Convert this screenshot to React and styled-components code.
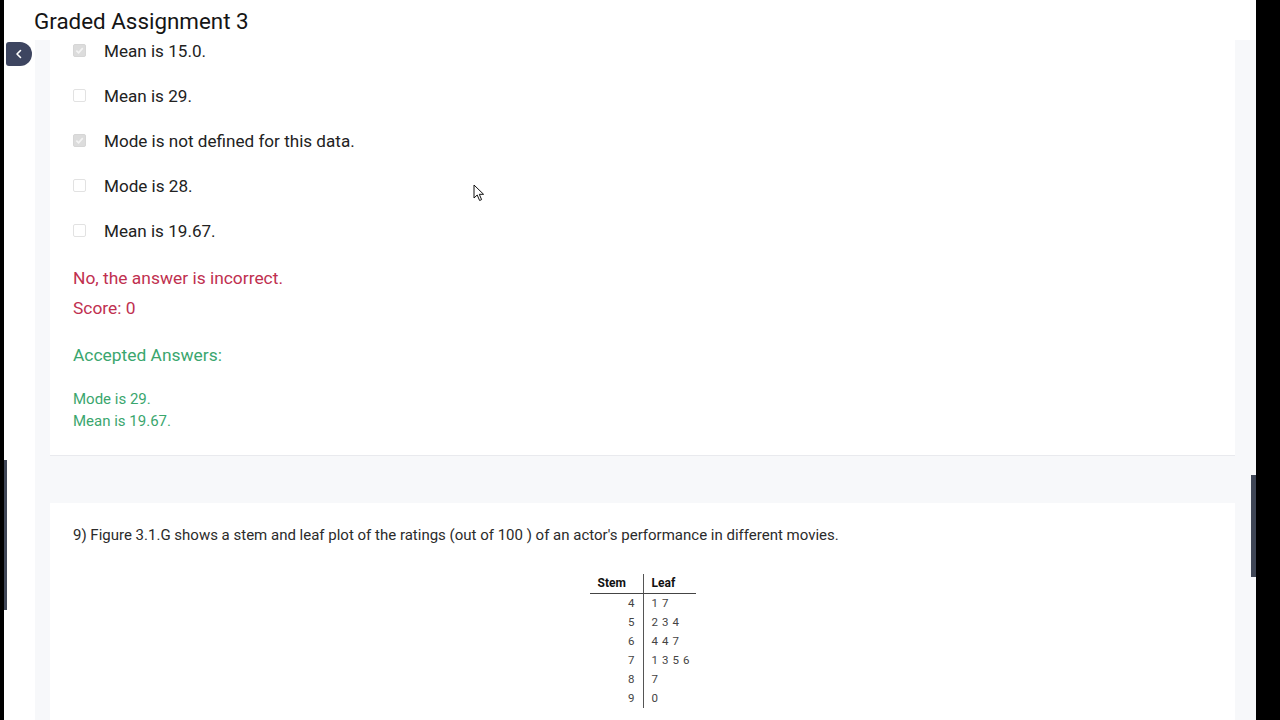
import React from 'react';
import styled, { createGlobalStyle } from 'styled-components';

const GlobalStyle = createGlobalStyle`
  html, body {
    margin: 0;
    padding: 0;
    background: #000;
    font-family: Roboto, "Liberation Sans", Arial, sans-serif;
    overflow: hidden;
  }
`;

const Frame = styled.div`
  display: flex;
  width: 1280px;
  height: 720px;
  background: #000;
  position: relative;
  overflow: hidden;
`;

const EdgeBlack = styled.div`
  width: ${(p) => p.w}px;
  flex-shrink: 0;
  background: #000;
`;

const LeftRail = styled.div`
  width: 3px;
  flex-shrink: 0;
  background: #fff;
  display: flex;
  flex-direction: column;
  padding-top: 460px;
  box-sizing: border-box;
`;

const RailThumb = styled.div`
  height: ${(p) => p.h}px;
  margin-top: ${(p) => p.top || 0}px;
  background: #3f4656;
`;

const Main = styled.div`
  flex: 1;
  display: flex;
  flex-direction: column;
  background: #fff;
  min-width: 0;
`;

const Header = styled.header`
  height: 40px;
  flex-shrink: 0;
  display: flex;
  align-items: center;
  padding-left: 27px;
  padding-top: 2px;
  box-sizing: border-box;
  font-size: 22.4px;
  color: #151515;
`;

const Body = styled.div`
  flex: 1;
  display: flex;
  min-height: 0;
`;

const WhiteGutter = styled.div`
  width: 28px;
  flex-shrink: 0;
  background: #fff;
`;

const GrayArea = styled.div`
  flex: 1;
  display: flex;
  background: #f7f8fa;
  min-width: 0;
`;

const CardsColumn = styled.div`
  flex: 1;
  display: flex;
  flex-direction: column;
  padding: 0 16px 0 15px;
  gap: 47px;
`;

const ScrollTrack = styled.div`
  width: 5px;
  flex-shrink: 0;
  display: flex;
  flex-direction: column;
`;

const Card = styled.section`
  background: #fff;
  padding: ${(p) => p.pad};
  border-bottom: 1px solid #e9eaee;
  flex-shrink: 0;
`;

const OptionList = styled.div`
  display: flex;
  flex-direction: column;
  gap: 25px;
  padding-top: 0.5px;
`;

const Option = styled.div`
  display: flex;
  align-items: center;
  height: 20px;
  font-size: 17.1px;
  color: #222;
`;

const Box = styled.span`
  width: 13px;
  height: 13px;
  box-sizing: border-box;
  border-radius: 2px;
  border: 1px solid ${(p) => (p.checked ? '#d6d6d6' : '#e2e2e2')};
  background: ${(p) => (p.checked ? '#dcdcdc' : '#fff')};
  margin-right: 18px;
  display: flex;
  align-items: center;
  justify-content: center;
  margin-top: -1px;
`;

const Feedback = styled.div`
  font-size: 17.4px;
  line-height: 20px;
  color: ${(p) => p.color};
  margin-top: ${(p) => p.mt}px;
`;

const AnswerLine = styled.div`
  font-size: 15px;
  line-height: 22px;
  color: #3aa66e;
  margin-top: ${(p) => p.mt || 0}px;
`;

const Question = styled.p`
  margin: 0;
  font-size: 15px;
  line-height: 20px;
  color: #2b2b2b;
`;

const Figure = styled.div`
  display: flex;
  justify-content: center;
  margin-top: 29px;
`;

const Table = styled.div`
  display: grid;
  grid-template-columns: 54px 52px;
`;

const Cell = styled.div`
  height: ${(p) => (p.head ? 20 : 19)}px;
  display: flex;
  align-items: center;
  box-sizing: border-box;
  white-space: nowrap;
  justify-content: ${(p) => (p.stem && !p.head ? 'flex-end' : 'flex-start')};
  padding: ${(p) => (p.stem ? (p.head ? '0 0 0 8px' : '0 8px 0 0') : '0 0 0 8px')};
  border-right: ${(p) => (p.stem ? '1.5px solid #555' : 'none')};
  border-bottom: ${(p) => (p.head ? '1.5px solid #444' : 'none')};
  font-weight: ${(p) => (p.head ? 700 : 400)};
  color: ${(p) => (p.head ? '#111' : '#444')};
  font-size: ${(p) => (p.head ? 12 : 11.5)}px;
  letter-spacing: ${(p) => (p.head || p.stem ? 0 : 0.6)}px;
`;

const BackTab = styled.button`
  position: absolute;
  left: 6px;
  top: 42px;
  width: 26px;
  height: 24px;
  border: none;
  padding: 0;
  background: #3d4560;
  border-radius: 3px 12px 12px 3px;
  display: flex;
  align-items: center;
  justify-content: center;
  cursor: pointer;
`;

const Cursor = styled.svg`
  position: absolute;
  left: 473px;
  top: 184px;
`;

const Check = () => (
  <svg width="9" height="9" viewBox="0 0 10 10">
    <path d="M1.5 5.2 L4 7.6 L8.6 2.4" fill="none" stroke="#f4f4f4" strokeWidth="1.8" />
  </svg>
);

const options = [
  { label: 'Mean is 15.0.', checked: true },
  { label: 'Mean is 29.', checked: false },
  { label: 'Mode is not defined for this data.', checked: true },
  { label: 'Mode is 28.', checked: false },
  { label: 'Mean is 19.67.', checked: false },
];

const plot = [
  ['4', '1 7'],
  ['5', '2 3 4'],
  ['6', '4 4 7'],
  ['7', '1 3 5 6'],
  ['8', '7'],
  ['9', '0'],
];

export default function App() {
  return (
    <Frame>
      <GlobalStyle />
      <EdgeBlack w={4} />
      <LeftRail>
        <RailThumb h={150} />
      </LeftRail>
      <Main>
        <Header>Graded Assignment 3</Header>
        <Body>
          <WhiteGutter />
          <GrayArea>
            <CardsColumn>
              <Card pad="0 23px 23px 23px">
                <OptionList>
                  {options.map((o) => (
                    <Option key={o.label}>
                      <Box checked={o.checked}>{o.checked && <Check />}</Box>
                      {o.label}
                    </Option>
                  ))}
                </OptionList>
                <Feedback color="#c0304f" mt={27}>No, the answer is incorrect.</Feedback>
                <Feedback color="#c0304f" mt={10}>Score: 0</Feedback>
                <Feedback color="#3aa66e" mt={27}>Accepted Answers:</Feedback>
                <AnswerLine mt={23}>Mode is 29.</AnswerLine>
                <AnswerLine>Mean is 19.67.</AnswerLine>
              </Card>
              <Card pad="22px 23px 30px 23px">
                <Question>
                  9) Figure 3.1.G shows a stem and leaf plot of the ratings (out of 100 ) of an actor&apos;s performance in different movies.
                </Question>
                <Figure>
                  <Table>
                    <Cell stem head>Stem</Cell>
                    <Cell head>Leaf</Cell>
                    {plot.map(([s, l]) => (
                      <React.Fragment key={s}>
                        <Cell stem>{s}</Cell>
                        <Cell>{l}</Cell>
                      </React.Fragment>
                    ))}
                  </Table>
                </Figure>
              </Card>
            </CardsColumn>
            <ScrollTrack>
              <RailThumb h={102} top={435} />
            </ScrollTrack>
          </GrayArea>
        </Body>
      </Main>
      <EdgeBlack w={24} />
      <BackTab aria-label="Back">
        <svg width="12" height="12" viewBox="0 0 24 24">
          <path d="M15 5 L8 12 L15 19" fill="none" stroke="#fff" strokeWidth="3.2" strokeLinecap="round" strokeLinejoin="round" />
        </svg>
      </BackTab>
      <Cursor width="13" height="18" viewBox="0 0 13 18">
        <path d="M1 1 L1 14 L4.2 11 L6.6 16.5 L8.6 15.6 L6.3 10.3 L10.6 10.3 Z" fill="#fff" stroke="#111" strokeWidth="1" strokeLinejoin="round" />
      </Cursor>
    </Frame>
  );
}
